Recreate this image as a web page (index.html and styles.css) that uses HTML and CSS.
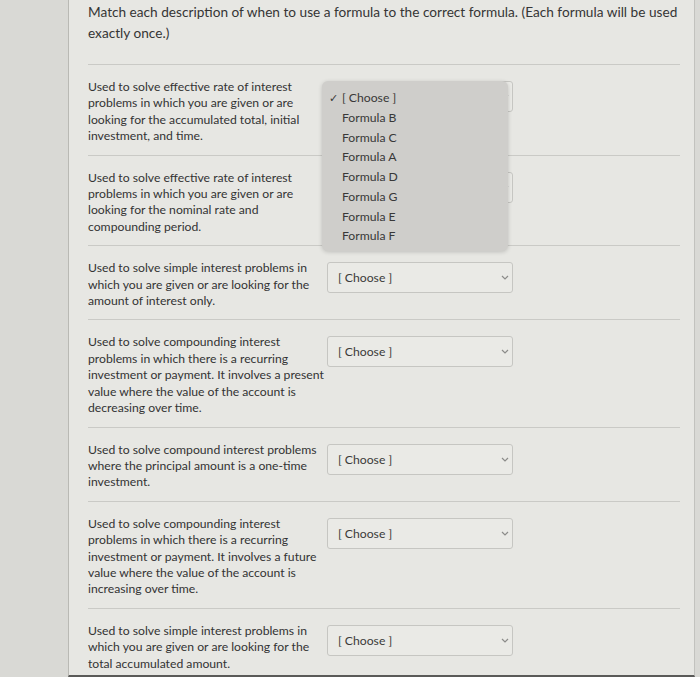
FILE: index.html
```html
<!DOCTYPE html>
<html lang="en">
<head>
    <meta charset="UTF-8">
    <meta name="viewport" content="width=device-width, initial-scale=1.0">
    <title>Matching Question</title>
    <link rel="stylesheet" href="styles.css">
</head>
<body>
    <div class="page">
        <div class="question">
            <p class="prompt">Match each description of when to use a formula to the correct formula. (Each formula will be used exactly once.)</p>

            <div class="match-list">
                <div class="match-row">
                    <div class="desc">Used to solve effective rate of interest problems in which you are given or are looking for the accumulated total, initial investment, and time.</div>
                    <div class="select-wrap">
                        <div class="select"><span>[ Choose ]</span><svg class="chev" viewBox="0 0 8 5"><polyline points="1,1 4,4 7,1"/></svg></div>
                        <ul class="menu">
                            <li class="selected"><span class="check">&#10003;</span>[ Choose ]</li>
                            <li>Formula B</li>
                            <li>Formula C</li>
                            <li>Formula A</li>
                            <li>Formula D</li>
                            <li>Formula G</li>
                            <li>Formula E</li>
                            <li>Formula F</li>
                        </ul>
                    </div>
                </div>

                <div class="match-row">
                    <div class="desc">Used to solve effective rate of interest problems in which you are given or are looking for the nominal rate and compounding period.</div>
                    <div class="select-wrap">
                        <div class="select"><span>[ Choose ]</span><svg class="chev" viewBox="0 0 8 5"><polyline points="1,1 4,4 7,1"/></svg></div>
                    </div>
                </div>

                <div class="match-row">
                    <div class="desc">Used to solve simple interest problems in which you are given or are looking for the amount of interest only.</div>
                    <div class="select-wrap">
                        <div class="select"><span>[ Choose ]</span><svg class="chev" viewBox="0 0 8 5"><polyline points="1,1 4,4 7,1"/></svg></div>
                    </div>
                </div>

                <div class="match-row">
                    <div class="desc">Used to solve compounding interest problems in which there is a recurring investment or payment. It involves a present value where the value of the account is decreasing over time.</div>
                    <div class="select-wrap">
                        <div class="select"><span>[ Choose ]</span><svg class="chev" viewBox="0 0 8 5"><polyline points="1,1 4,4 7,1"/></svg></div>
                    </div>
                </div>

                <div class="match-row">
                    <div class="desc">Used to solve compound interest problems where the principal amount is a one-time investment.</div>
                    <div class="select-wrap">
                        <div class="select"><span>[ Choose ]</span><svg class="chev" viewBox="0 0 8 5"><polyline points="1,1 4,4 7,1"/></svg></div>
                    </div>
                </div>

                <div class="match-row">
                    <div class="desc">Used to solve compounding interest problems in which there is a recurring investment or payment. It involves a future value where the value of the account is increasing over time.</div>
                    <div class="select-wrap">
                        <div class="select"><span>[ Choose ]</span><svg class="chev" viewBox="0 0 8 5"><polyline points="1,1 4,4 7,1"/></svg></div>
                    </div>
                </div>

                <div class="match-row">
                    <div class="desc">Used to solve simple interest problems in which you are given or are looking for the total accumulated amount.</div>
                    <div class="select-wrap">
                        <div class="select"><span>[ Choose ]</span><svg class="chev" viewBox="0 0 8 5"><polyline points="1,1 4,4 7,1"/></svg></div>
                    </div>
                </div>
            </div>
        </div>
    </div>
</body>
</html>
```

FILE: styles.css
```css
html, body {
    margin: 0;
    height: 100%;
}
body {
    background-color: #d9d9d5;
    font-family: Lato, "Open Sans", sans-serif;
    color: #333;
    overflow: hidden;
}
.page {
    margin-left: 68px;
    width: 625px;
    height: 675px;
    background-color: #e7e7e3;
    border-left: 1px solid #b9b9b4;
    border-right: 1px solid #c2c2be;
    border-bottom: 2px solid #5a5a58;
}
.question {
    padding: 2px 14px 0 19px;
}
.prompt {
    margin: 0 -2px 21px 0;
    font-size: 13.65px;
    line-height: 20.5px;
    color: #353535;
}
.match-row {
    display: flex;
    border-top: 1px solid #cacac6;
    padding: 14px 0 10px;
}
.desc {
    width: 236px;
    font-size: 12.2px;
    line-height: 16.4px;
}
.select-wrap {
    position: relative;
    margin: 2px 0 0 3px;
}
.select {
    display: flex;
    align-items: center;
    justify-content: space-between;
    box-sizing: border-box;
    width: 186px;
    height: 31px;
    padding: 0 3px 0 10px;
    border: 1px solid #c6c6c2;
    border-radius: 3px;
    background-color: #eaeae6;
    font-size: 12.2px;
    color: #3a3a3a;
}
.chev {
    width: 8px;
    height: 5px;
    fill: none;
    stroke: #8c8c8a;
    stroke-width: 1.2;
}
.menu {
    position: absolute;
    z-index: 2;
    top: 0;
    left: -5px;
    width: 186px;
    margin: 0;
    padding: 7px 0 5px;
    list-style: none;
    background-color: #cfcecb;
    border-radius: 6px;
    box-shadow: 0 1px 4px rgba(0,0,0,0.18);
}
.menu li {
    position: relative;
    height: 19.75px;
    line-height: 19.75px;
    padding-left: 20px;
    font-size: 12.2px;
    color: #383838;
}
.menu .check {
    position: absolute;
    left: 7px;
    font-size: 11px;
}
```
